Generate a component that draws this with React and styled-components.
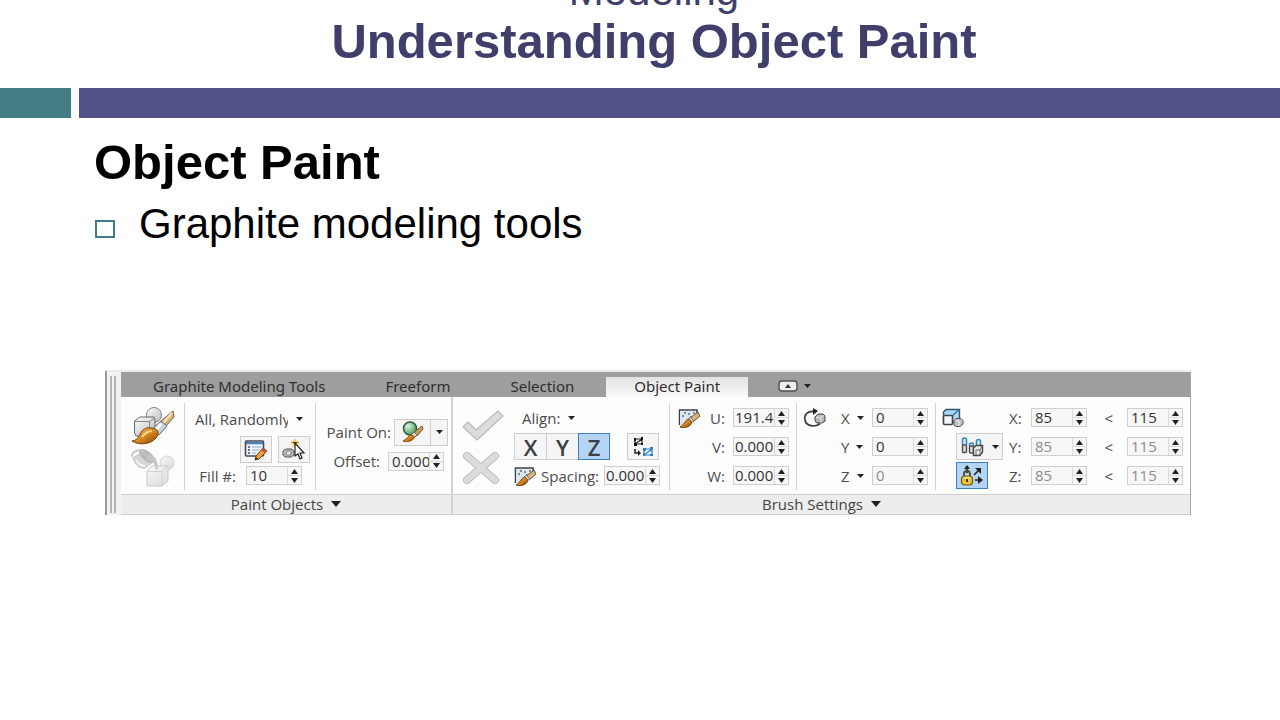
import React from "react";
import styled, { createGlobalStyle } from "styled-components";

const GlobalStyle = createGlobalStyle`
  *, *::before, *::after { box-sizing: border-box; }
  body { margin: 0; background: #fff; font-family: "Liberation Sans", Arial, sans-serif; }
  button, input, select { font: inherit; color: inherit; margin: 0; }
`;

const Slide = styled.main`
  min-height: 100vh;
  overflow: hidden;
  background: #fff;
`;

const Header = styled.header`
  display: flex;
  flex-direction: column;
  justify-content: flex-end;
  align-items: center;
  height: 88px;
  padding: 0 0 21px 28px;
  overflow: hidden;
  color: #403f6b;
  white-space: nowrap;
`;

const Kicker = styled.p`
  flex: none;
  margin: 0;
  font-size: 42px;
  line-height: 48px;
`;

const Title = styled.h1`
  flex: none;
  margin: 0;
  font-size: 49px;
  line-height: 52px;
`;

const Band = styled.div`
  display: flex;
  gap: 8px;
  height: 30px;
`;

const BandPart = styled.div`
  flex: ${(p) => (p.$wide ? "1" : "none")};
  width: 71px;
  background: ${(p) => (p.$wide ? "#525189" : "#427d84")};
`;

const Content = styled.section`
  padding: 16px 89px 0 94px;
  color: #000;
`;

const Heading = styled.h2`
  margin: 0 0 10px;
  font-size: 49px;
  line-height: 56px;
`;

const Bullets = styled.ul`
  margin: 0;
  padding: 0;
  list-style: none;
`;

const Bullet = styled.li`
  display: flex;
  align-items: center;
  gap: 24px;
  font-size: 42px;
  line-height: 48px;

  &::before {
    content: "";
    width: 20px;
    height: 18px;
    margin: 10px 0 0 1px;
    border: 2px solid #427d84;
  }
`;

const Ribbon = styled.section`
  display: flex;
  margin: 122px 89px 0 105px;
  border-left: 2px solid #9c9c9c;
  border-top: 2px solid #ececec;
  background: #f2f2f2;
  font-family: "Open Sans", "Noto Sans", sans-serif;
  font-size: 15px;
  line-height: 18px;
  color: #444;
`;

const Grip = styled.div`
  flex: none;
  width: 14px;
  padding: 4px 4px 2px 3px;

  &::before {
    content: "";
    display: block;
    width: 6px;
    height: 100%;
    border: solid #b4b4b4;
    border-width: 0 2px;
  }
`;

const RibbonMain = styled.div`
  flex: 1;
  min-width: 0;
  border-right: 1px solid #a6a6a6;
  background: #fdfdfd;
`;

const TabBar = styled.div`
  display: flex;
  align-items: flex-end;
  gap: 4px;
  height: 25px;
  padding-left: 4px;
  background: #9e9e9e;
`;

const Tab = styled.button`
  height: 20px;
  padding: 0 28px 2px;
  border: 0;
  background: ${(p) => (p.$active ? "linear-gradient(#e2e2e2, #fafafa)" : "transparent")};
  color: #2e2e2e;
  font-family: "Noto Sans", "Open Sans", sans-serif;
  line-height: 18px;
  white-space: nowrap;
`;

const CollapseButton = styled.button`
  display: flex;
  align-items: center;
  gap: 6px;
  height: 22px;
  margin-left: 26px;
  padding: 0;
  border: 0;
  background: none;
`;

const Panels = styled.div`
  display: flex;
`;

const Panel = styled.section`
  flex: ${(p) => (p.$grow ? "1" : "none")};
  min-width: 0;
  width: ${(p) => (p.$grow ? "auto" : "332px")};
  border-right: ${(p) => (p.$grow ? "0" : "2px solid #d2d2d2")};
`;

const PanelBody = styled.div`
  display: flex;
  height: 97px;
  padding: 6px 0 4px;
`;

const PanelTitle = styled.button`
  display: flex;
  align-items: center;
  justify-content: center;
  gap: 8px;
  width: 100%;
  height: 21px;
  padding: 0 0 2px;
  border: solid #d0d0d0;
  border-width: 1px 0;
  background: #ededed;
`;

const Group = styled.div`
  display: flex;
  flex-direction: column;
  justify-content: ${(p) => (p.$top ? "flex-start" : "center")};
  flex: ${(p) => (p.$w ? "none" : "1")};
  width: ${(p) => (p.$w ? p.$w + "px" : "auto")};
  padding-left: ${(p) => p.$left || 8}px;
  border-right: ${(p) => (p.$line ? "1px solid #d3d3d3" : "0")};
`;

const Row = styled.div`
  display: flex;
  align-items: center;
  gap: ${(p) => p.$gap || 0}px;
  justify-content: ${(p) => (p.$end ? "flex-end" : "flex-start")};
  height: ${(p) => p.$h || 29}px;
  padding-right: ${(p) => p.$right || 0}px;
  white-space: nowrap;
`;

const SpreadRow = styled(Row)`
  justify-content: space-between;
`;

const FieldGrid = styled.div`
  display: grid;
  grid-template-columns: ${(p) => p.$cols};
  grid-auto-rows: 29px;
  align-items: center;
`;

const Label = styled.label`
  flex: none;
  color: #4c4c4c;
  text-align: ${(p) => (p.$right ? "right" : "left")};
  padding-right: ${(p) => p.$right || 0}px;
`;

const SpinBox = styled.div`
  display: flex;
  flex: none;
  width: 56px;
  height: 19px;
  border: 1px solid #cfcfcf;
  background: #f7f7f7;
`;

const SpinInput = styled.input`
  flex: 1;
  width: 0;
  min-width: 0;
  height: 16px;
  padding: 0 0 0 ${(p) => p.$pad}px;
  border: 0;
  outline: 0;
  background: transparent;
  color: #333;
  line-height: 16px;

  &:disabled { color: #8c8c8c; }
`;

const SpinButtons = styled.div`
  display: grid;
  flex: none;
  width: 14px;
  border-left: 1px solid #dadada;
`;

const SpinButton = styled.button`
  display: flex;
  align-items: center;
  justify-content: center;
  min-height: 0;
  padding: 0;
  border: 0;
  background: #f7f7f7;

  & + & { border-top: 1px solid #dadada; }
`;

const ToolButton = styled.button`
  display: flex;
  flex: none;
  align-items: center;
  justify-content: center;
  width: ${(p) => p.$w || 32}px;
  height: 27px;
  padding: 0;
  border: 1px solid ${(p) => (p.$on ? "#3f7fbf" : "#cdcdcd")};
  background: ${(p) => (p.$on ? "#b4d4f3" : "#f5f5f5")};
  gap: 8px;
`;

const AxisButton = styled(ToolButton)`
  border-right-width: ${(p) => (p.$on ? 1 : 0)}px;
  color: #3b3f45;
  font-size: 22px;
  font-weight: 600;
  line-height: 24px;
`;

const AxisGroup = styled.div`
  display: flex;
`;

const PlainButton = styled.button`
  display: flex;
  align-items: center;
  gap: ${(p) => p.$gap || 0}px;
  padding: 0 0 0 ${(p) => p.$indent || 0}px;
  border: 0;
  background: none;
  color: #4c4c4c;
`;

const SplitButton = styled.div`
  display: flex;
  flex: none;

  & > button + button { border-left: 0; }
`;

const SelectWrap = styled.div`
  display: flex;
  align-items: center;
  gap: 8px;
  height: 31px;
`;

const SourceSelect = styled.select`
  width: 93px;
  height: 20px;
  padding: 0;
  border: 0;
  outline: 0;
  appearance: none;
  background: none;
  color: #4c4c4c;
`;

const Icon = styled.svg`
  display: block;
  flex: none;
`;

function Caret({ w = 7, h = 4, up }) {
  return (
    <Icon width={w} height={h} viewBox="0 0 6 4" preserveAspectRatio="none" aria-hidden="true">
      <path d={up ? "M0 4 3 0 6 4Z" : "M0 0H6L3 4Z"} fill="#222" />
    </Icon>
  );
}

function Spinner({ id, value, disabled, pad = 3, name }) {
  return (
    <SpinBox>
      <SpinInput id={id} defaultValue={value} disabled={disabled} $pad={pad} aria-label={name} />
      <SpinButtons>
        <SpinButton type="button" aria-label={`Increase ${name}`}><Caret w={7} h={5} up /></SpinButton>
        <SpinButton type="button" aria-label={`Decrease ${name}`}><Caret w={7} h={5} /></SpinButton>
      </SpinButtons>
    </SpinBox>
  );
}

const HiddenDefs = styled.svg`
  position: absolute;
`;

function Gradients() {
  return (
    <HiddenDefs width="0" height="0" aria-hidden="true">
      <defs>
        <linearGradient id="bristle" x1="0" y1="0" x2="1" y2="1">
          <stop offset="0" stopColor="#f6bd62" />
          <stop offset="0.5" stopColor="#d98a1f" />
          <stop offset="1" stopColor="#7c3f08" />
        </linearGradient>
        <linearGradient id="stone" x1="0" y1="0" x2="1" y2="1">
          <stop offset="0" stopColor="#ffffff" />
          <stop offset="1" stopColor="#b9b9b9" />
        </linearGradient>
        <linearGradient id="pale" x1="0" y1="0" x2="1" y2="1">
          <stop offset="0" stopColor="#fafafa" />
          <stop offset="1" stopColor="#dadada" />
        </linearGradient>
        <radialGradient id="greenBall" cx="0.35" cy="0.3" r="0.8">
          <stop offset="0" stopColor="#d9f3da" />
          <stop offset="0.6" stopColor="#80bd88" />
          <stop offset="1" stopColor="#477e50" />
        </radialGradient>
      </defs>
    </HiddenDefs>
  );
}

function PaintIcon() {
  return (
    <Icon width="44" height="42" viewBox="0 0 44 42">
      <circle cx="23" cy="9" r="7.5" fill="url(#stone)" stroke="#858585" />
      <path d="M3.5 15 9 11H23L24 14V26L18 30H5L3.5 27Z" fill="url(#stone)" stroke="#666" />
      <path d="M3.5 15.5H18.5V29.5M18.5 15.5 24 12" fill="none" stroke="#888" />
      <path d="M42 5 43 11 35 20 30 15Z" fill="#d5b577" stroke="#746044" />
      <path d="M41 7 32 17" stroke="#f6e6bd" strokeWidth="2" />
      <path d="M30 15 36 20 28 29 21 23Z" fill="#c9d1da" stroke="#626a75" />
      <path d="M30 18 25 24" stroke="#fff" strokeWidth="3" />
      <path d="M20 22C27 22 29 27 25 32C20 38 9 40 1 35C8 34 8 29 11 25C14 22 17 21 20 22Z" fill="url(#bristle)" stroke="#7a4308" />
      <path d="M11 31C14 27 18 25 21 25" fill="none" stroke="#ffd58a" strokeWidth="2" />
    </Icon>
  );
}

function PourIcon() {
  return (
    <Icon width="44" height="40" viewBox="0 0 44 40">
      <circle cx="36" cy="15" r="7" fill="url(#pale)" stroke="#d2d2d2" />
      <path d="M16 23 21 18H37V33L31 38H16Z" fill="url(#pale)" stroke="#c9c9c9" />
      <path d="M16 23.5H31V38M31 23.5 37 18" fill="none" stroke="#d0d0d0" />
      <path d="M2 10 13 3 23 13 14 20C9 21 5 18 2 10Z" fill="#d6d6d6" stroke="#c0c0c0" />
      <path d="M5 12C7 16 10 18 14 18" fill="none" stroke="#f2f2f2" strokeWidth="2" />
      <ellipse cx="16" cy="8" rx="9" ry="4" transform="rotate(40 16 8)" fill="#bcbcbc" stroke="#aeaeae" />
      <path d="M17 7C23 7 27 11 27 21L25 22C24 15 21 13 16 12Z" fill="#c6c6c6" />
      <path d="M1 9C0 4 7 1 13 3" fill="none" stroke="#c8c8c8" strokeWidth="2" />
    </Icon>
  );
}

function ListIcon() {
  return (
    <Icon width="24" height="22" viewBox="0 0 24 22">
      <rect x="1.5" y="2" width="18" height="15" rx="1" fill="#f0f5f9" stroke="#404b59" strokeWidth="1.6" />
      <path d="M2 4H19" stroke="#4d7fae" strokeWidth="2.5" />
      <path d="M4 8H6M4 11H6M4 14H6" stroke="#445" strokeWidth="1.5" />
      <path d="M8 8H17M8 11H15M8 14H12" stroke="#a9c5de" strokeWidth="1.5" />
      <path d="M19 9 23 12 15 20 11 21 12 17Z" fill="#e8a33c" stroke="#72400f" />
      <path d="M19 9 23 12 21 14 17 11Z" fill="#c7523c" />
      <path d="M11 21 12 18 14 20Z" fill="#333" />
    </Icon>
  );
}

function PickIcon() {
  return (
    <Icon width="24" height="22" viewBox="0 0 24 22">
      <circle cx="13" cy="5" r="4" fill="#ffe3a1" />
      <path d="M13 0V4M9 3 13 5 17 3M13 5V8" stroke="#e7a93f" />
      <path d="M1 12 4 10H10L12 12V16L9 18H3L1 16Z" fill="#bbb" stroke="#555" />
      <path d="M5 12H9V16H4Z" fill="#ededed" stroke="#888" />
      <path d="M13 4V17L16 15L18 20L20 19L18 14H22Z" fill="#fff" stroke="#222" strokeWidth="1.2" />
    </Icon>
  );
}

function PaintOnIcon() {
  return (
    <Icon width="24" height="22" viewBox="0 0 24 22">
      <circle cx="9" cy="7.5" r="6.5" fill="url(#greenBall)" stroke="#345d39" strokeWidth="1.5" />
      <path d="M21 5 22 8 16 15 12 12Z" fill="#c79d5f" stroke="#7b5527" />
      <path d="M13 11 16 14 13 17 10 14Z" fill="#dadada" stroke="#75695d" />
      <path d="M10 14C14 14 14 18 11 19C8 21 5 21 2 20C6 18 7 15 10 14Z" fill="url(#bristle)" stroke="#8d4d12" />
    </Icon>
  );
}

function StrokeIcon({ name }) {
  return (
    <Icon width="22" height="20" viewBox="0 0 22 20" role="img" aria-label={name}>
      <path d="M1.5 17V2H19V8" fill="none" stroke="#3c4149" strokeWidth="1.5" />
      <path d="M2 16V3H18L6 17Z" fill="#dce6ee" />
      <path d="M4 8H6M6 5H8M10 6H12M12 9H14M15 5H17" stroke="#5b6f83" strokeWidth="1.4" />
      <path d="M20 4 22 8 15 14 12 10Z" fill="#d8b57b" stroke="#6d5030" />
      <path d="M12 9 16 13 13 15 10 12Z" fill="#dedede" stroke="#777" />
      <path d="M10 11C15 12 14 17 11 18C8 20 5 20 2 19C6 17 7 13 10 11Z" fill="url(#bristle)" stroke="#71420f" />
    </Icon>
  );
}

function CheckIcon() {
  return (
    <Icon width="42" height="31" viewBox="0 0 42 31">
      <path d="M1 17 6 12 14 20 36 1 41 6 15 30Z" fill="#dcdcdc" stroke="#bdbdbd" strokeWidth="1.3" strokeLinejoin="round" />
    </Icon>
  );
}

function CrossIcon() {
  return (
    <Icon width="38" height="34" viewBox="0 0 38 34" fill="none" strokeLinecap="round">
      <path d="M5 5 33 29M33 5 5 29" stroke="#bdbdbd" strokeWidth="8" />
      <path d="M5 5 33 29M33 5 5 29" stroke="#dcdcdc" strokeWidth="6" />
    </Icon>
  );
}

function SwapIcon() {
  return (
    <Icon width="22" height="20" viewBox="0 0 22 20" fill="none">
      <path d="M3 2H10V7H3ZM3 7 10 2" stroke="#222" strokeWidth="1.2" />
      <path d="M2 1H4V4H2ZM9 0H11V3H9ZM2 6H5V9H2ZM9 6H11V8H9Z" fill="#111" />
      <path d="M12 12H20V18H12ZM12 18 20 12" stroke="#2e7fc0" strokeWidth="1.2" />
      <path d="M11 11H14V14H11ZM18 10H21V12H18ZM11 16H13V19H11ZM18 17H21V19H18Z" fill="#2e7fc0" />
      <path d="M3 12V16H7" stroke="#222" strokeWidth="1.5" />
      <path d="M6 13V19L9 16Z" fill="#222" />
    </Icon>
  );
}

function RotateIcon() {
  return (
    <Icon width="24" height="20" viewBox="0 0 24 20" role="img" aria-label="Rotate">
      <path d="M11 3.5C4 3 1 7 2 12C3 18 12 20 17 15.5" fill="none" stroke="#3d3d3d" strokeWidth="1.7" />
      <path d="M10 0 15 3 10 7Z" fill="#222" />
      <path d="M12 9 15 6H20L22 8V13L19 15H14L12 13Z" fill="#b5b5b5" stroke="#444" />
      <path d="M13 9.5H18V14.5M18 9.5 21 7.5" fill="none" stroke="#e6e6e6" />
    </Icon>
  );
}

function ScaleIcon() {
  return (
    <Icon width="22" height="20" viewBox="0 0 22 20" role="img" aria-label="Scale">
      <path d="M1.5 8V4L4 1.5H17.5V10L12 14H1.5Z" fill="#a9d8f5" stroke="#34546d" strokeWidth="1.4" />
      <path d="M10 8 17 2" stroke="#34749f" strokeWidth="1.4" />
      <rect x="1.5" y="7.5" width="9" height="9" rx="1" fill="#f5f5f5" stroke="#3e4750" strokeWidth="1.6" />
      <path d="M12 13 14 10.5H19L21 12.5V16L18 18.5H14L12 17Z" fill="#c0c0c0" stroke="#555" />
      <path d="M13 13H17V18" fill="none" stroke="#eee" />
    </Icon>
  );
}

function ScaleModeIcon() {
  return (
    <Icon width="23" height="20" viewBox="0 0 23 20">
      <path d="M1.5 8V2Q3.5 0 5.5 2V8M8.5 9V7Q10.5 5 12.5 7V9M15.5 8V3.5Q17.5 1.5 19.5 3.5V8" fill="#d4eafa" stroke="#3a83ba" strokeWidth="1.5" />
      <rect x="1.5" y="8" width="4" height="7.5" rx="1" fill="#ddd" stroke="#4a4a4a" strokeWidth="1.4" />
      <rect x="8.5" y="9" width="4" height="7" rx="1" fill="#ddd" stroke="#4a4a4a" strokeWidth="1.4" />
      <path d="M12.5 11 15 8.5H21.5V15L19 18.5H12.5Z" fill="#eee" stroke="#444" strokeWidth="1.4" />
      <path d="M15 18V13H19V18M19 13 21 9" fill="none" stroke="#666" />
    </Icon>
  );
}

function LockIcon() {
  return (
    <Icon width="24" height="22" viewBox="0 0 24 22">
      <path d="M7 8V3M14 10 19 5M15 15H20" stroke="#222" strokeWidth="1.6" />
      <path d="M4 4 7 0 10 4ZM15 3H21V9ZM18 11 23 15 18 19Z" fill="#222" />
      <path d="M4 12V9Q4 6 7 6T10 9V12" fill="none" stroke="#4d4938" strokeWidth="1.8" />
      <rect x="1.5" y="11" width="11" height="9" rx="3" fill="#e6c33a" stroke="#705b17" strokeWidth="1.2" />
      <path d="M4 13H10" stroke="#fff0a2" />
      <path d="M7 14V17" stroke="#493c12" strokeWidth="2" />
    </Icon>
  );
}

function CollapseIcon() {
  return (
    <Icon width="20" height="12" viewBox="0 0 20 12">
      <rect x="1" y="1" width="18" height="10" rx="3" fill="#eee" stroke="#4d535b" strokeWidth="1.4" />
      <path d="M7 8 10 4 13 8Z" fill="#333" />
    </Icon>
  );
}

const offsets = [["U", "191.4"], ["V", "0.000"], ["W", "0.000"]];
const rotations = [["X", false], ["Y", false], ["Z", true]];

function PaintObjectsPanel() {
  return (
    <Panel>
      <PanelBody>
        <Group $w={64} $left={10} $line>
          <PlainButton type="button" aria-label="Paint with objects"><PaintIcon /></PlainButton>
          <PlainButton type="button" aria-label="Fill with objects"><PourIcon /></PlainButton>
        </Group>
        <Group $w={131} $left={10} $line $top>
          <SelectWrap>
            <SourceSelect aria-label="Objects to paint" defaultValue="random">
              <option value="random">All, Randomly</option>
            </SourceSelect>
            <Caret />
          </SelectWrap>
          <Row $h={31} $end $gap={6} $right={5}>
            <ToolButton type="button" aria-label="Edit object list"><ListIcon /></ToolButton>
            <ToolButton type="button" aria-label="Pick object"><PickIcon /></ToolButton>
          </Row>
          <Row $h={21} $end $gap={10} $right={13}>
            <Label htmlFor="fill">Fill #:</Label>
            <Spinner id="fill" value="10" name="Fill number" />
          </Row>
        </Group>
        <Group>
          <Row $end $gap={3} $right={3}>
            <Label as="span">Paint On:</Label>
            <SplitButton>
              <ToolButton type="button" $w={37} aria-label="Paint on surface"><PaintOnIcon /></ToolButton>
              <ToolButton type="button" $w={17} aria-label="Paint on options"><Caret /></ToolButton>
            </SplitButton>
          </Row>
          <Row $end $gap={8} $right={7}>
            <Label htmlFor="offset">Offset:</Label>
            <Spinner id="offset" value="0.000" name="Offset" />
          </Row>
        </Group>
      </PanelBody>
      <PanelTitle type="button">Paint Objects<Caret w={10} h={6} /></PanelTitle>
    </Panel>
  );
}

function BrushSettingsPanel() {
  return (
    <Panel $grow>
      <PanelBody>
        <Group $w={56} $left={9}>
          <Row $h={43}>
            <PlainButton type="button" aria-label="Accept"><CheckIcon /></PlainButton>
          </Row>
          <Row $h={43}>
            <PlainButton type="button" aria-label="Cancel"><CrossIcon /></PlainButton>
          </Row>
        </Group>
        <Group $w={161} $left={5} $line>
          <Row>
            <PlainButton type="button" $gap={8} $indent={8}>Align:<Caret /></PlainButton>
          </Row>
          <SpreadRow $right={10}>
            <AxisGroup>
              <AxisButton type="button">X</AxisButton>
              <AxisButton type="button">Y</AxisButton>
              <AxisButton type="button" $on aria-pressed="true">Z</AxisButton>
            </AxisGroup>
            <ToolButton type="button" aria-label="Flip axis"><SwapIcon /></ToolButton>
          </SpreadRow>
          <Row $gap={5}>
            <StrokeIcon name="Spacing" />
            <Label htmlFor="spacing">Spacing:</Label>
            <Spinner id="spacing" value="0.000" name="Spacing" pad={1} />
          </Row>
        </Group>
        <Group $w={127} $line>
          <FieldGrid $cols="24px 31px 56px">
            {offsets.map(([axis, value], i) => (
              <React.Fragment key={axis}>
                {i === 0 ? <StrokeIcon name="Scatter" /> : <span />}
                <Label htmlFor={`scatter${axis}`} $right={8}>{axis}:</Label>
                <Spinner id={`scatter${axis}`} value={value} name={`Scatter ${axis}`} pad={1} />
              </React.Fragment>
            ))}
          </FieldGrid>
        </Group>
        <Group $w={139} $left={6} $line>
          <FieldGrid $cols="38px 31px 56px">
            {rotations.map(([axis, off], i) => (
              <React.Fragment key={axis}>
                {i === 0 ? <RotateIcon /> : <span />}
                <PlainButton type="button" $gap={7}>{axis}<Caret /></PlainButton>
                <Spinner value="0" disabled={off} name={`Rotate ${axis}`} />
              </React.Fragment>
            ))}
          </FieldGrid>
        </Group>
        <Group $left={6}>
          <FieldGrid $cols="14px 53px 22px 56px 40px 56px">
            {["X", "Y", "Z"].map((axis, i) => (
              <React.Fragment key={axis}>
                {i === 0 ? <ScaleIcon /> : <span />}
                {i === 0 && <span />}
                {i === 1 && (
                  <ToolButton type="button" $w={47} aria-label="Scale mode"><ScaleModeIcon /><Caret /></ToolButton>
                )}
                {i === 2 && (
                  <ToolButton type="button" $on aria-label="Lock axes" aria-pressed="true"><LockIcon /></ToolButton>
                )}
                <Label htmlFor={`scale${axis}`}>{axis}:</Label>
                <Spinner id={`scale${axis}`} value="85" disabled={i > 0} name={`Scale ${axis} from`} />
                <Label htmlFor={`limit${axis}`} $right={14}>&lt;</Label>
                <Spinner id={`limit${axis}`} value="115" disabled={i > 0} name={`Scale ${axis} to`} />
              </React.Fragment>
            ))}
          </FieldGrid>
        </Group>
      </PanelBody>
      <PanelTitle type="button">Brush Settings<Caret w={10} h={6} /></PanelTitle>
    </Panel>
  );
}

export default function App() {
  return (
    <Slide>
      <GlobalStyle />
      <Gradients />
      <Header>
        <Kicker>Modeling</Kicker>
        <Title>Understanding Object Paint</Title>
      </Header>
      <Band>
        <BandPart />
        <BandPart $wide />
      </Band>
      <Content>
        <Heading>Object Paint</Heading>
        <Bullets>
          <Bullet>Graphite modeling tools</Bullet>
        </Bullets>
      </Content>
      <Ribbon>
        <Grip />
        <RibbonMain>
          <TabBar>
            <Tab type="button">Graphite Modeling Tools</Tab>
            <Tab type="button">Freeform</Tab>
            <Tab type="button">Selection</Tab>
            <Tab type="button" $active>Object Paint</Tab>
            <CollapseButton type="button" aria-label="Collapse ribbon">
              <CollapseIcon />
              <Caret />
            </CollapseButton>
          </TabBar>
          <Panels>
            <PaintObjectsPanel />
            <BrushSettingsPanel />
          </Panels>
        </RibbonMain>
      </Ribbon>
    </Slide>
  );
}
